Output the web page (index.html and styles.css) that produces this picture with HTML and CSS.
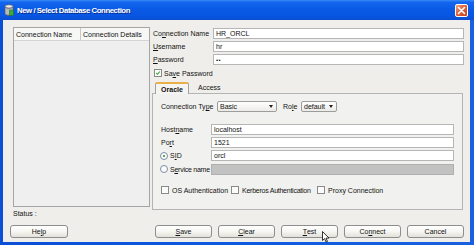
FILE: index.html
```html
<!DOCTYPE html>
<html>
<head>
<meta charset="utf-8">
<link rel="stylesheet" href="styles.css">
</head>
<body>
<div class="window">
  <div class="titlebar">
    <svg class="title-icon" viewBox="0 0 10 12" width="10" height="12">
      <ellipse cx="5" cy="2.5" rx="4" ry="1.8" fill="#e8e8e8" stroke="#5a5a5a" stroke-width="0.6"/>
      <path d="M1 2.5 V9.5 A4 1.8 0 0 0 9 9.5 V2.5 A4 1.8 0 0 1 1 2.5 Z" fill="#b8b8b8" stroke="#5a5a5a" stroke-width="0.6"/>
      <rect x="5.5" y="6" width="4" height="5.5" fill="#3caa3c" stroke="#1d6b1d" stroke-width="0.5"/>
    </svg>
    <span class="title-text">New / Select Database Connection</span>
    <div class="close">
      <svg viewBox="0 0 9 9" width="9" height="9"><path d="M1.5 1.5 L7.5 7.5 M7.5 1.5 L1.5 7.5" stroke="#fff" stroke-width="1.6" stroke-linecap="round"/></svg>
    </div>
  </div>
  <div class="content">
    <div class="main">
      <div class="left">
        <div class="list">
          <div class="list-head">
            <div class="col col-name">Connection Name</div>
            <div class="col col-details">Connection Details</div>
          </div>
        </div>
        <div class="status">Status :</div>
      </div>
      <div class="right">
        <div class="fields">
          <label class="lbl">Co<u>n</u>nection Name</label>
          <div class="input">HR_ORCL</div>
          <label class="lbl"><u>U</u>sername</label>
          <div class="input">hr</div>
          <label class="lbl"><u>P</u>assword</label>
          <div class="input pw">••</div>
        </div>
        <div class="check-row save-pw">
          <span class="cbox checked">
            <svg viewBox="0 0 8 8" width="8" height="8"><path d="M1.6 4 L3.3 5.7 L6.5 2" fill="none" stroke="#21a121" stroke-width="1.4"/></svg>
          </span>
          <span>Sa<u>v</u>e Password</span>
        </div>
        <div class="tabs">
          <div class="tab active">Oracle</div>
          <div class="tab">Access</div>
        </div>
        <div class="panel">
          <div class="type-row">
            <span class="lbl type-lbl">Connection Ty<u>p</u>e</span>
            <div class="select sel-basic"><span>Basic</span><span class="arrow"></span></div>
            <span class="lbl role-lbl">Ro<u>l</u>e</span>
            <div class="select sel-role"><span>default</span><span class="arrow"></span></div>
          </div>
          <div class="fields2">
            <span class="lbl">Host<u>n</u>ame</span>
            <div class="input">localhost</div>
            <span class="lbl">Po<u>r</u>t</span>
            <div class="input">1521</div>
            <span class="lbl radio-lbl"><span class="radio on"></span><span>S<u>I</u>D</span></span>
            <div class="input">orcl</div>
            <span class="lbl radio-lbl"><span class="radio"></span><span class="tight">S<u>e</u>rvice name</span></span>
            <div class="input disabled"></div>
          </div>
          <div class="auth-row">
            <span class="check-row"><span class="cbox"></span><span>OS Authentication</span></span>
            <span class="check-row"><span class="cbox"></span><span class="tight">Kerberos Authentication</span></span>
            <span class="check-row"><span class="cbox"></span><span>Proxy Connection</span></span>
          </div>
        </div>
      </div>
    </div>
    <div class="buttons">
      <div class="btn help">He<u>l</u>p</div>
      <div class="btn-group">
        <div class="btn"><u>S</u>ave</div>
        <div class="btn"><u>C</u>lear</div>
        <div class="btn"><u>T</u>est</div>
        <div class="btn">Co<u>n</u>nect</div>
        <div class="btn">Cancel</div>
      </div>
    </div>
  </div>
  <svg class="cursor" viewBox="0 0 8 12" width="8" height="12">
    <path d="M0.5 0.5 L0.5 9.5 L2.6 7.6 L4.1 11 L5.5 10.4 L4 7.1 L7 7.1 Z" fill="#fff" stroke="#000" stroke-width="0.8" stroke-linejoin="round"/>
  </svg>
</div>
</body>
</html>
```

FILE: styles.css
```css
* { box-sizing: border-box; }
html, body { margin: 0; padding: 0; }
body {
  width: 474px;
  height: 245px;
  overflow: hidden;
  font-family: "Liberation Sans", Arial, sans-serif;
  font-size: 7px;
  color: #111;
  background: #fff;
}
u { text-decoration: underline; text-underline-offset: 1px; }
.tight { letter-spacing: -0.25px; }

.window {
  width: 474px;
  height: 245px;
  display: flex;
  flex-direction: column;
  position: relative;
  background: linear-gradient(90deg, #0a4fd6 0%, #0d5ae0 50%, #1a60e0 100%);
}

.titlebar {
  height: 20px;
  display: flex;
  align-items: center;
  padding: 0 6px 0 4px;
  background: linear-gradient(#3a8af6 0%, #1465ee 12%, #0a5ae6 45%, #0856e2 80%, #0a4ed0 100%);
  color: #fff;
  font-weight: bold;
  font-size: 7.8px;
}
.title-icon { margin-right: 3px; }
.title-text { flex: 1; text-shadow: 1px 1px 0 #0b2f90; letter-spacing: -0.45px; }
.close {
  width: 13px;
  height: 13px;
  border: 1px solid #fff;
  border-radius: 2px;
  background: linear-gradient(135deg, #f0a080 0%, #e0623c 45%, #c8401a 100%);
  display: flex;
  align-items: center;
  justify-content: center;
}

.content {
  flex: 1;
  margin: 0 4px 3px 3px;
  background: #efeeea;
  display: flex;
  flex-direction: column;
  padding: 7px 6px 4px 7px;
}

.main {
  height: 194px;
  display: flex;
}

.left {
  width: 142px;
  padding-left: 3px;
  display: flex;
  flex-direction: column;
}
.list {
  width: 137px;
  height: 180px;
  border: 1px solid #a5a5a5;
  background: #efefef;
}
.list-head {
  display: flex;
  height: 13px;
  border-bottom: 1px solid #d4d4d4;
  background: #f7f7f5;
}
.col {
  display: flex;
  align-items: center;
  padding-left: 2px;
}
.col-name { width: 67px; border-right: 1px solid #c8c8c8; }
.col-details { flex: 1; }
.status { margin-top: 3px; line-height: 8px; }

.right {
  width: 312px;
  display: flex;
  flex-direction: column;
}
.fields {
  display: grid;
  grid-template-columns: 61px 251px;
  row-gap: 2px;
  margin-top: 1px;
  align-items: center;
}
.lbl { padding-left: 1px; white-space: nowrap; }
.input {
  height: 11px;
  border: 1px solid #b6b6b6;
  background: #fff;
  display: flex;
  align-items: center;
  padding-left: 2px;
  line-height: 1;
}
.input.pw { font-size: 6px; letter-spacing: 0.5px; }
.input.disabled { background: #c2c2c2; border-color: #b0b0b0; }

.check-row { display: flex; align-items: center; gap: 2px; white-space: nowrap; }
.save-pw { margin-top: 4px; padding-left: 2px; height: 8px; }
.cbox {
  width: 8px;
  height: 8px;
  border: 1px solid #8a8a8a;
  background: #fbfbfb;
  display: inline-flex;
  align-items: center;
  justify-content: center;
  flex: none;
}
.cbox svg { display: block; }

.tabs {
  display: flex;
  margin-top: 4px;
  height: 12px;
  padding-left: 3px;
  align-items: flex-end;
}
.tab {
  height: 11px;
  padding: 0 9px;
  display: flex;
  align-items: center;
}
.tab.active {
  height: 12px;
  width: 34px;
  justify-content: center;
  font-weight: bold;
  border: 1px solid #a0a0a0;
  border-bottom: none;
  border-top: 2px solid #e9b04a;
  border-radius: 2px 2px 0 0;
  background: #f4f4f2;
  margin-bottom: -1px;
  position: relative;
  z-index: 1;
}
.panel {
  width: 311px;
  height: 117px;
  border: 1px solid #b4b4b4;
  background: #f1f1ef;
  padding: 7px 8px 0 7px;
  display: flex;
  flex-direction: column;
}
.type-row {
  display: flex;
  align-items: center;
  height: 11px;
}
.type-lbl { width: 57px; }
.role-lbl { width: 19px; margin-left: 5px; }
.select {
  height: 11px;
  border: 1px solid #9c9c9c;
  border-radius: 2px;
  background: linear-gradient(#ffffff, #ecebe6);
  display: flex;
  align-items: center;
  justify-content: space-between;
  padding: 0 3px 0 2px;
}
.sel-basic { width: 60px; }
.sel-role { width: 36px; }
.arrow {
  width: 0;
  height: 0;
  border-left: 2.5px solid transparent;
  border-right: 2.5px solid transparent;
  border-top: 3px solid #222;
}

.fields2 {
  display: grid;
  grid-template-columns: 51px 243px;
  row-gap: 2px;
  margin-top: 12px;
  align-items: center;
}
.fields2 .input:last-child { margin-top: 1px; }
.radio-lbl { display: flex; align-items: center; gap: 2px; padding-left: 0; }
.radio {
  width: 8px;
  height: 8px;
  border-radius: 50%;
  border: 1px solid #7e8ea5;
  background: #fafafa;
  position: relative;
  flex: none;
}
.radio.on::after {
  content: "";
  position: absolute;
  left: 2px;
  top: 2px;
  width: 2px;
  height: 2px;
  border-radius: 50%;
  background: #2a8a2a;
}

.auth-row {
  display: flex;
  gap: 0;
  margin-top: 11px;
  padding-left: 1px;
}
.auth-row .check-row:nth-child(1) { width: 70px; }
.auth-row .check-row:nth-child(2) { width: 86px; }
.auth-row .cbox { width: 8px; height: 8px; margin-right: 1px; }

.buttons {
  margin-top: 4px;
  display: flex;
  height: 13px;
}
.btn {
  width: 57px;
  height: 13px;
  border: 1px solid #8e8e8e;
  border-radius: 3px;
  background: linear-gradient(#ffffff 0%, #f6f6f2 50%, #e2e1da 100%);
  display: flex;
  align-items: center;
  justify-content: center;
}
.btn.help { width: 58px; }
.btn-group {
  margin-left: 87px;
  display: flex;
  gap: 6px;
}

.cursor {
  position: absolute;
  left: 322px;
  top: 231px;
}
```
